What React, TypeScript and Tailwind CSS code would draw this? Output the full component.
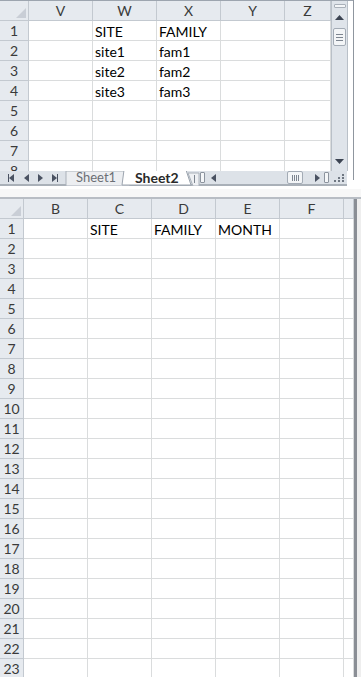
import React from "react";

const FONT = { fontFamily: "Lato, 'Open Sans', sans-serif" };

type Col = { l: string; w: number };

const topCols: Col[] = [
  { l: "V", w: 64 },
  { l: "W", w: 64 },
  { l: "X", w: 64 },
  { l: "Y", w: 64 },
  { l: "Z", w: 46 },
];
const topData: Record<number, Record<string, string>> = {
  1: { W: "SITE", X: "FAMILY" },
  2: { W: "site1", X: "fam1" },
  3: { W: "site2", X: "fam2" },
  4: { W: "site3", X: "fam3" },
};

const botCols: Col[] = [
  { l: "B", w: 64 },
  { l: "C", w: 64 },
  { l: "D", w: 64 },
  { l: "E", w: 64 },
  { l: "F", w: 64 },
  { l: "", w: 10 },
];
const botData: Record<number, Record<string, string>> = {
  1: { C: "SITE", D: "FAMILY", E: "MONTH" },
};

function Corner({ w }: { w: number }) {
  return (
    <div
      className="relative h-full shrink-0 border-r border-b border-[#c3c9d0] bg-[#e6eaef]"
      style={{ width: w }}
    >
      <svg className="absolute right-[2px] bottom-[2px]" width="10" height="10" viewBox="0 0 10 10">
        <polygon points="10,0 10,10 0,10" fill="#c9ced6" />
      </svg>
    </div>
  );
}

function Grid({
  cols,
  data,
  rowHeaderW,
  rows,
}: {
  cols: Col[];
  data: Record<number, Record<string, string>>;
  rowHeaderW: number;
  rows: number;
}) {
  return (
    <div className="flex flex-col" style={FONT}>
      <div className="flex h-[20px] shrink-0">
        <Corner w={rowHeaderW} />
        {cols.map((c, i) => (
          <div
            key={i}
            className="flex h-full shrink-0 items-center justify-center border-r border-b border-[#c3c9d0] bg-[#e6eaef] text-[14px] text-[#3a3a3a]"
            style={{ width: c.w }}
          >
            {c.l}
          </div>
        ))}
      </div>
      {Array.from({ length: rows }, (_, r) => r + 1).map((r) => (
        <div key={r} className="flex h-[20px] shrink-0">
          <div
            className="flex h-full shrink-0 items-center justify-center border-r border-b border-[#c3c9d0] bg-[#e6eaef] text-[14px] text-[#3a3a3a]"
            style={{ width: rowHeaderW }}
          >
            {r}
          </div>
          {cols.map((c, i) => (
            <div
              key={i}
              className="flex h-full shrink-0 items-center overflow-hidden whitespace-nowrap border-r border-b border-[#dadcdd] pl-[2px] pt-[1px] text-[14px] text-black"
              style={{ width: c.w }}
            >
              {data[r]?.[c.l] ?? ""}
            </div>
          ))}
        </div>
      ))}
    </div>
  );
}

function VScroll() {
  return (
    <div className="relative flex h-full w-[16px] shrink-0 flex-col items-center border-l border-[#b9c0c8] bg-[#dfe4ea]">
      <div className="mt-[3px] h-[4px] w-[12px] rounded-[1px] border border-[#a9b0b9] bg-[#f4f6f8]" />
      <svg className="mt-[7px]" width="9" height="5" viewBox="0 0 9 5">
        <polygon points="4.5,0 9,5 0,5" fill="#3c4452" />
      </svg>
      <div className="mt-[8px] flex h-[18px] w-[13px] flex-col items-center justify-center gap-[2px] rounded-[2px] border border-[#a3abb5] bg-[#f3f5f7]">
        <div className="h-px w-[7px] bg-[#7d8590]" />
        <div className="h-px w-[7px] bg-[#7d8590]" />
        <div className="h-px w-[7px] bg-[#7d8590]" />
      </div>
      <svg className="absolute bottom-[7px]" width="9" height="5" viewBox="0 0 9 5">
        <polygon points="0,0 9,0 4.5,5" fill="#3c4452" />
      </svg>
    </div>
  );
}

function Tri({ dir }: { dir: "l" | "r" }) {
  return (
    <svg width="5" height="8" viewBox="0 0 5 8">
      {dir === "l" ? (
        <polygon points="5,0 5,8 0,4" fill="#4a5262" />
      ) : (
        <polygon points="0,0 0,8 5,4" fill="#4a5262" />
      )}
    </svg>
  );
}

function TabBar() {
  return (
    <div className="relative flex h-[15px] w-[347px] shrink-0 items-center border-b-2 border-[#a9b0b8] bg-[#dde2e8]" style={FONT}>
      {/* nav buttons */}
      <div className="flex h-full w-[62px] shrink-0 items-center pl-[8px]">
        <div className="flex items-center">
          <div className="h-[8px] w-px bg-[#4a5262]" />
          <Tri dir="l" />
        </div>
        <div className="ml-[10px]">
          <Tri dir="l" />
        </div>
        <div className="ml-[9px]">
          <Tri dir="r" />
        </div>
        <div className="ml-[9px] flex items-center">
          <Tri dir="r" />
          <div className="h-[8px] w-px bg-[#4a5262]" />
        </div>
      </div>
      {/* tabs */}
      <div className="relative h-full w-[138px] shrink-0">
        <svg className="absolute left-0 top-0" width="138" height="15" viewBox="0 0 138 15">
          <polygon points="4,0 64,0 68,15 4,15" fill="#eceef1" stroke="#aab1ba" strokeWidth="1" />
          <polygon points="62,-1 124,-1 129,14 60,14" fill="#ffffff" stroke="#9ca4ae" strokeWidth="1" />
          <polygon points="126,2 137,2 137,15 131,15" fill="#eef0f3" stroke="#aab1ba" strokeWidth="1" />
          <rect x="132" y="4" width="1" height="8" fill="#7d8590" />
        </svg>
        <span className="absolute left-[14px] top-[-1px] text-[13px] leading-[15px] text-[#6b6f75]">Sheet1</span>
        <span className="absolute left-[73px] top-[-1px] text-[14px] font-bold leading-[15px] text-[#2a2a2a]">Sheet2</span>
      </div>
      {/* split box */}
      <div className="h-[11px] w-[5px] shrink-0 rounded-[1px] border border-[#8c949e] bg-[#f4f6f8]" />
      {/* h scroll */}
      <div className="flex h-full w-[126px] shrink-0 items-center">
        <div className="ml-[6px]">
          <Tri dir="l" />
        </div>
        <div className="w-[71px]" />
        <div className="flex h-[13px] w-[16px] items-center justify-center gap-[1px] rounded-[2px] border border-[#a3abb5] bg-[#f3f5f7]">
          <div className="h-[6px] w-px bg-[#7d8590]" />
          <div className="h-[6px] w-px bg-[#7d8590]" />
          <div className="h-[6px] w-px bg-[#7d8590]" />
          <div className="h-[6px] w-px bg-[#7d8590]" />
        </div>
        <div className="w-[12px]" />
        <Tri dir="r" />
        <div className="ml-[4px] h-[11px] w-[5px] rounded-[1px] border border-[#8c949e] bg-[#f4f6f8]" />
      </div>
      {/* grip */}
      <div className="flex h-full w-[16px] shrink-0 items-center justify-center">
        <svg width="12" height="10" viewBox="0 0 12 10">
          <rect x="9" y="1" width="2" height="2" fill="#6f7782" />
          <rect x="9" y="4" width="2" height="2" fill="#6f7782" />
          <rect x="9" y="7" width="2" height="2" fill="#6f7782" />
          <rect x="5" y="4" width="2" height="2" fill="#6f7782" />
          <rect x="5" y="7" width="2" height="2" fill="#6f7782" />
          <rect x="1" y="7" width="2" height="2" fill="#6f7782" />
        </svg>
      </div>
    </div>
  );
}

export default function App() {
  return (
    <div className="h-[677px] w-[361px] overflow-hidden bg-white">
      {/* top window */}
      <div className="flex h-[189px] w-full">
        <div className="flex w-[353px] shrink-0 flex-col">
          <div className="flex h-[171px] shrink-0 overflow-hidden border-t border-[#9da5af]">
            <div className="h-full w-[331px] shrink-0 overflow-hidden">
              <Grid cols={topCols} data={topData} rowHeaderW={29} rows={8} />
            </div>
            <VScroll />
            <div className="h-full w-[6px] shrink-0 border-l border-[#b9c0c8] bg-white" />
          </div>
          <TabBar />
        </div>
        <div className="h-[180px] w-[8px] shrink-0 rounded-br-[6px] border-l border-[#8f969f] bg-white" />
      </div>
      {/* gap */}
      <div className="h-[8px] w-full bg-[#f7f7f7]" />
      {/* bottom window */}
      <div className="flex h-[480px] w-full border-t-2 border-[#b8bdc4]">
        <div className="h-full w-[354px] shrink-0 overflow-hidden">
          <Grid cols={botCols} data={botData} rowHeaderW={24} rows={23} />
        </div>
        <div className="h-full w-[3px] shrink-0 bg-[#8a8e95]" />
        <div className="h-full flex-1 bg-[#eeeeee]" />
      </div>
    </div>
  );
}
